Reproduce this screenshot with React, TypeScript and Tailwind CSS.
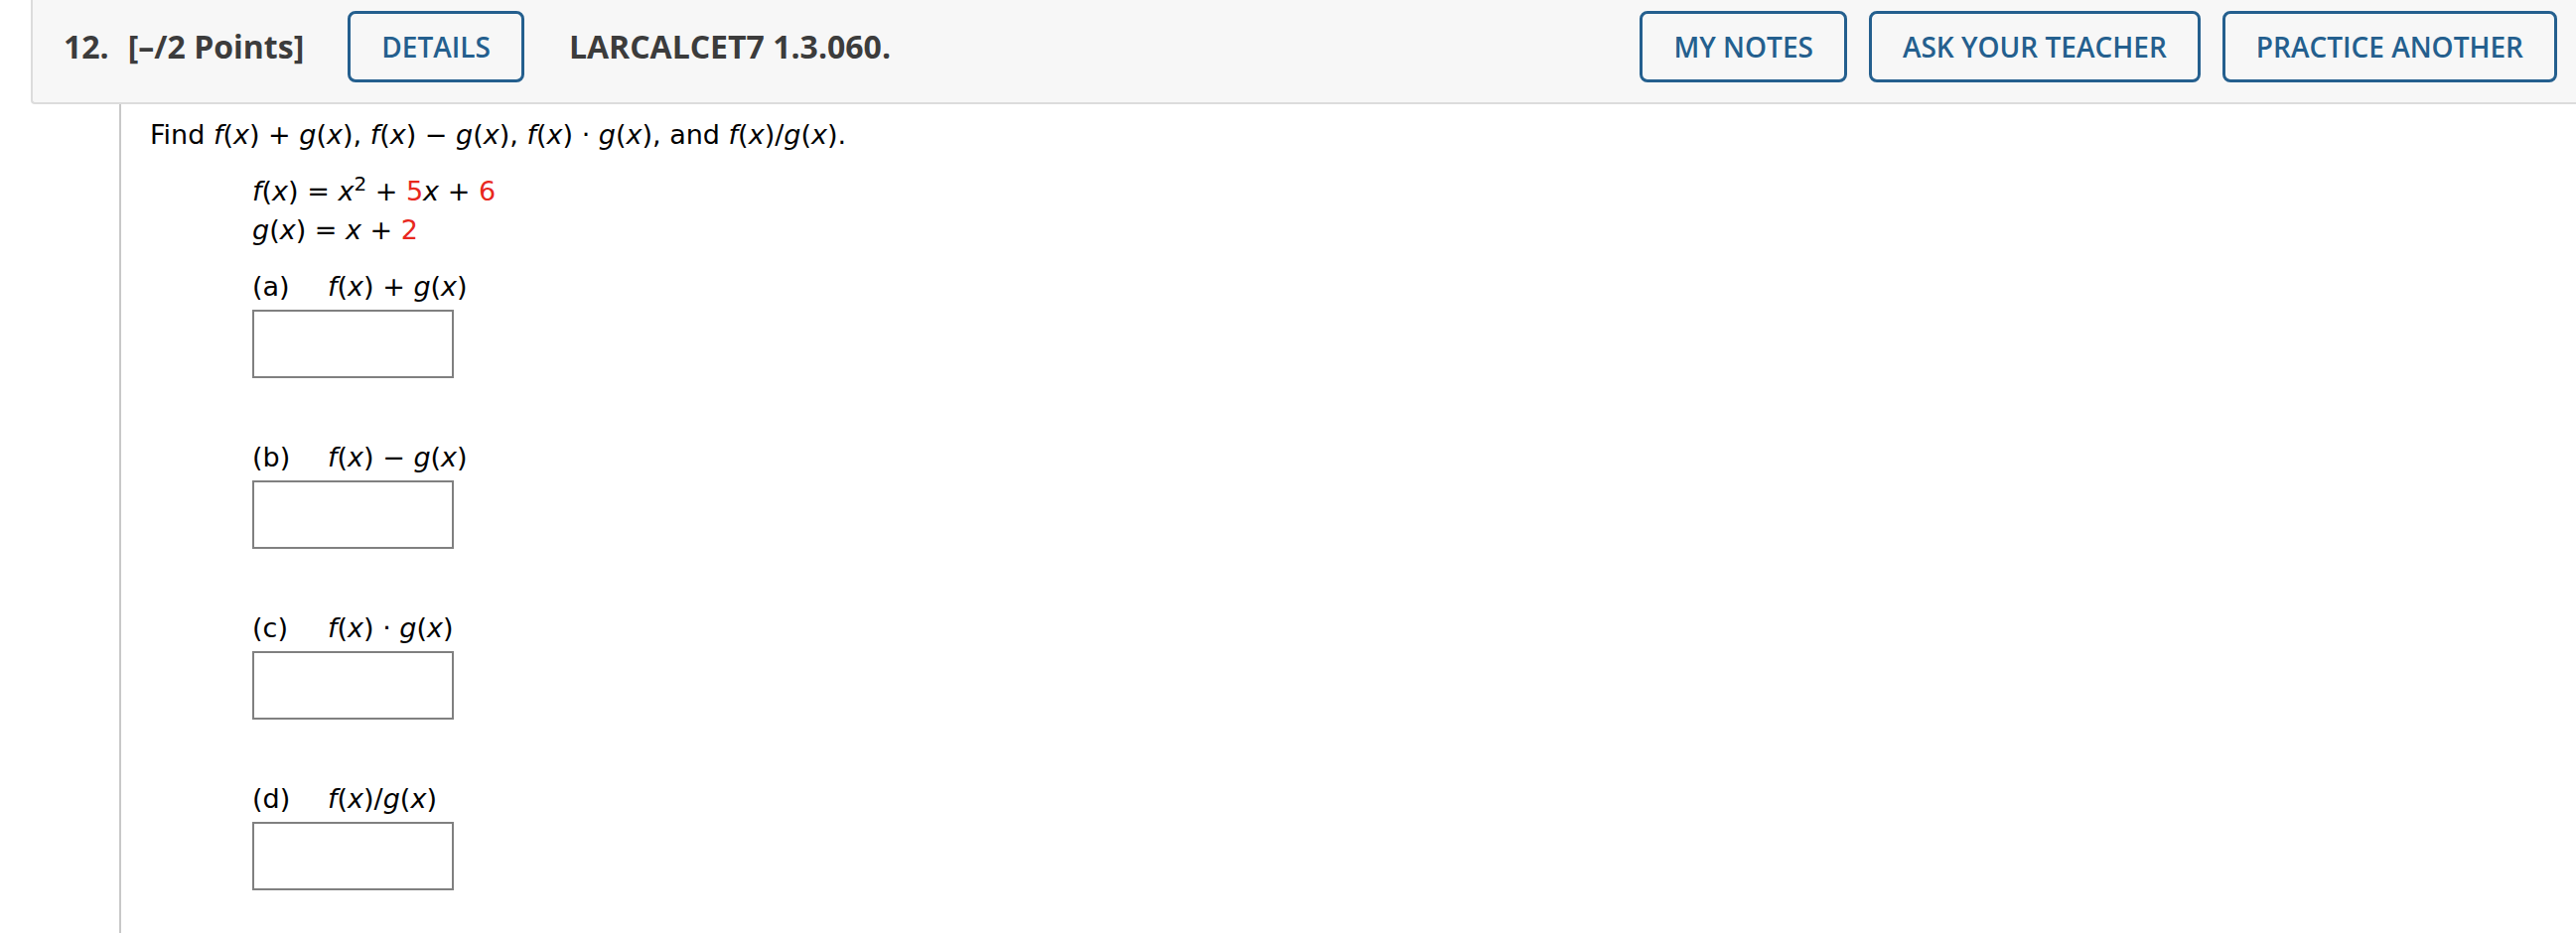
import React from "react";

const body = { fontFamily: '"DejaVu Sans", Verdana, sans-serif' };

function F({ n }: { n: string }) {
  return (
    <>
      <i>{n}</i>(<i>x</i>)
    </>
  );
}

function Red({ children }: { children: React.ReactNode }) {
  return <span className="text-[#e8281e]">{children}</span>;
}

function HeaderButton({ label }: { label: string }) {
  return (
    <button className="h-[72px] px-[31px] rounded-[8px] border-[3px] border-[#245f8e] text-[#245f8e] text-[28px] font-semibold leading-none">
      {label}
    </button>
  );
}

function Part({ tag, children, first }: { tag: string; children: React.ReactNode; first?: boolean }) {
  return (
    <div className={first ? "mt-[18px]" : "mt-[60px]"}>
      <div className="flex">
        <span className="w-[76px]">({tag})</span>
        <span>{children}</span>
      </div>
      <div className="mt-[4px] w-[203px] h-[69px] border-2 border-[#808080] bg-white" />
    </div>
  );
}

export default function App() {
  return (
    <div className="h-[940px] overflow-hidden bg-white flex flex-col">
      <div
        className="ml-[31px] h-[105px] bg-[#f7f7f7] border-l-2 border-b-2 border-[#dcdcdc] rounded-bl-[4px] flex items-start pt-[11px] pl-[31px] pr-[19px] text-[#3c3c3c]"
        style={{ fontFamily: '"Open Sans", sans-serif' }}
      >
        <div className="flex items-center h-[72px]">
          <span className="text-[32px] font-bold">12.</span>
          <span className="text-[32px] font-bold ml-[19px]">[–/2 Points]</span>
          <div className="ml-[44px]">
            <HeaderButton label="DETAILS" />
          </div>
          <span className="text-[32px] font-bold ml-[45px]">LARCALCET7 1.3.060.</span>
        </div>
        <div className="ml-auto flex items-center gap-[22px]">
          <HeaderButton label="MY NOTES" />
          <HeaderButton label="ASK YOUR TEACHER" />
          <HeaderButton label="PRACTICE ANOTHER" />
        </div>
      </div>
      <div className="flex-1 ml-[120px] border-l-2 border-[#c8c8c8] pl-[29px] pt-[11px] text-black text-[27px] leading-[39px]" style={body}>
        <p>
          Find <F n="f" /> + <F n="g" />, <F n="f" /> − <F n="g" />, <F n="f" /> · <F n="g" />, and <F n="f" />/<F n="g" />.
        </p>
        <div className="pl-[103px]">
          <div className="mt-[18px]">
            <div>
              <F n="f" /> = <i>x</i>
              <sup className="text-[20px]">2</sup> + <Red>5</Red>
              <i>x</i> + <Red>6</Red>
            </div>
            <div>
              <F n="g" /> = <i>x</i> + <Red>2</Red>
            </div>
          </div>
          <Part tag="a" first>
            <F n="f" /> + <F n="g" />
          </Part>
          <Part tag="b">
            <F n="f" /> − <F n="g" />
          </Part>
          <Part tag="c">
            <F n="f" /> · <F n="g" />
          </Part>
          <Part tag="d">
            <F n="f" />/<F n="g" />
          </Part>
        </div>
      </div>
    </div>
  );
}
